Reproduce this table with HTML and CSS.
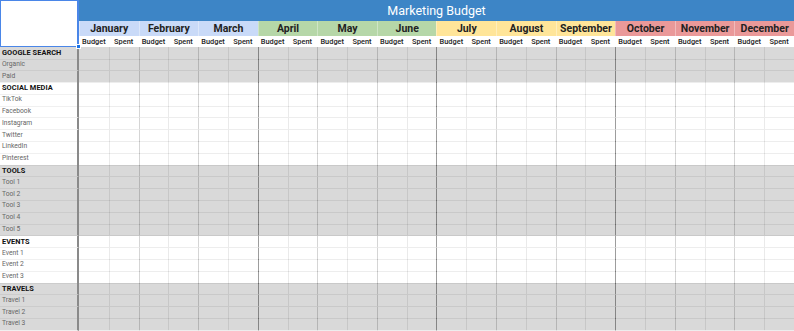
FILE: index.html
```html
<!DOCTYPE html>
<html>
<head>
<meta charset="utf-8">
<link rel="stylesheet" href="styles.css">
</head>
<body>
<div class="sheet">
  <div class="top">
    <div class="corner"><span class="handle"></span></div>
    <div class="head">
      <div class="title">Marketing Budget</div>
      <div class="months">
        <div class="m q1">January</div><div class="m q1">February</div><div class="m q1">March</div>
        <div class="m q2">April</div><div class="m q2">May</div><div class="m q2">June</div>
        <div class="m q3">July</div><div class="m q3">August</div><div class="m q3">September</div>
        <div class="m q4">October</div><div class="m q4">November</div><div class="m q4">December</div>
      </div>
      <div class="subs">
        <span>Budget</span><span>Spent</span><span>Budget</span><span>Spent</span><span>Budget</span><span>Spent</span>
        <span>Budget</span><span>Spent</span><span>Budget</span><span>Spent</span><span>Budget</span><span>Spent</span>
        <span>Budget</span><span>Spent</span><span>Budget</span><span>Spent</span><span>Budget</span><span>Spent</span>
        <span>Budget</span><span>Spent</span><span>Budget</span><span>Spent</span><span>Budget</span><span>Spent</span>
      </div>
    </div>
  </div>
  <div class="rows">
    <div class="row grey sec"><div class="lab">GOOGLE SEARCH</div><i></i><i></i><i></i><i></i><i></i><i></i><i></i><i></i><i></i><i></i><i></i><i></i><i></i><i></i><i></i><i></i><i></i><i></i><i></i><i></i><i></i><i></i><i></i><i></i></div>
    <div class="row grey"><div class="lab">Organic</div><i></i><i></i><i></i><i></i><i></i><i></i><i></i><i></i><i></i><i></i><i></i><i></i><i></i><i></i><i></i><i></i><i></i><i></i><i></i><i></i><i></i><i></i><i></i><i></i></div>
    <div class="row grey"><div class="lab">Paid</div><i></i><i></i><i></i><i></i><i></i><i></i><i></i><i></i><i></i><i></i><i></i><i></i><i></i><i></i><i></i><i></i><i></i><i></i><i></i><i></i><i></i><i></i><i></i><i></i></div>
    <div class="row sec"><div class="lab">SOCIAL MEDIA</div><i></i><i></i><i></i><i></i><i></i><i></i><i></i><i></i><i></i><i></i><i></i><i></i><i></i><i></i><i></i><i></i><i></i><i></i><i></i><i></i><i></i><i></i><i></i><i></i></div>
    <div class="row"><div class="lab">TikTok</div><i></i><i></i><i></i><i></i><i></i><i></i><i></i><i></i><i></i><i></i><i></i><i></i><i></i><i></i><i></i><i></i><i></i><i></i><i></i><i></i><i></i><i></i><i></i><i></i></div>
    <div class="row"><div class="lab">Facebook</div><i></i><i></i><i></i><i></i><i></i><i></i><i></i><i></i><i></i><i></i><i></i><i></i><i></i><i></i><i></i><i></i><i></i><i></i><i></i><i></i><i></i><i></i><i></i><i></i></div>
    <div class="row"><div class="lab">Instagram</div><i></i><i></i><i></i><i></i><i></i><i></i><i></i><i></i><i></i><i></i><i></i><i></i><i></i><i></i><i></i><i></i><i></i><i></i><i></i><i></i><i></i><i></i><i></i><i></i></div>
    <div class="row"><div class="lab">Twitter</div><i></i><i></i><i></i><i></i><i></i><i></i><i></i><i></i><i></i><i></i><i></i><i></i><i></i><i></i><i></i><i></i><i></i><i></i><i></i><i></i><i></i><i></i><i></i><i></i></div>
    <div class="row"><div class="lab">LinkedIn</div><i></i><i></i><i></i><i></i><i></i><i></i><i></i><i></i><i></i><i></i><i></i><i></i><i></i><i></i><i></i><i></i><i></i><i></i><i></i><i></i><i></i><i></i><i></i><i></i></div>
    <div class="row"><div class="lab">Pinterest</div><i></i><i></i><i></i><i></i><i></i><i></i><i></i><i></i><i></i><i></i><i></i><i></i><i></i><i></i><i></i><i></i><i></i><i></i><i></i><i></i><i></i><i></i><i></i><i></i></div>
    <div class="row grey sec"><div class="lab">TOOLS</div><i></i><i></i><i></i><i></i><i></i><i></i><i></i><i></i><i></i><i></i><i></i><i></i><i></i><i></i><i></i><i></i><i></i><i></i><i></i><i></i><i></i><i></i><i></i><i></i></div>
    <div class="row grey"><div class="lab">Tool 1</div><i></i><i></i><i></i><i></i><i></i><i></i><i></i><i></i><i></i><i></i><i></i><i></i><i></i><i></i><i></i><i></i><i></i><i></i><i></i><i></i><i></i><i></i><i></i><i></i></div>
    <div class="row grey"><div class="lab">Tool 2</div><i></i><i></i><i></i><i></i><i></i><i></i><i></i><i></i><i></i><i></i><i></i><i></i><i></i><i></i><i></i><i></i><i></i><i></i><i></i><i></i><i></i><i></i><i></i><i></i></div>
    <div class="row grey"><div class="lab">Tool 3</div><i></i><i></i><i></i><i></i><i></i><i></i><i></i><i></i><i></i><i></i><i></i><i></i><i></i><i></i><i></i><i></i><i></i><i></i><i></i><i></i><i></i><i></i><i></i><i></i></div>
    <div class="row grey"><div class="lab">Tool 4</div><i></i><i></i><i></i><i></i><i></i><i></i><i></i><i></i><i></i><i></i><i></i><i></i><i></i><i></i><i></i><i></i><i></i><i></i><i></i><i></i><i></i><i></i><i></i><i></i></div>
    <div class="row grey"><div class="lab">Tool 5</div><i></i><i></i><i></i><i></i><i></i><i></i><i></i><i></i><i></i><i></i><i></i><i></i><i></i><i></i><i></i><i></i><i></i><i></i><i></i><i></i><i></i><i></i><i></i><i></i></div>
    <div class="row sec"><div class="lab">EVENTS</div><i></i><i></i><i></i><i></i><i></i><i></i><i></i><i></i><i></i><i></i><i></i><i></i><i></i><i></i><i></i><i></i><i></i><i></i><i></i><i></i><i></i><i></i><i></i><i></i></div>
    <div class="row"><div class="lab">Event 1</div><i></i><i></i><i></i><i></i><i></i><i></i><i></i><i></i><i></i><i></i><i></i><i></i><i></i><i></i><i></i><i></i><i></i><i></i><i></i><i></i><i></i><i></i><i></i><i></i></div>
    <div class="row"><div class="lab">Event 2</div><i></i><i></i><i></i><i></i><i></i><i></i><i></i><i></i><i></i><i></i><i></i><i></i><i></i><i></i><i></i><i></i><i></i><i></i><i></i><i></i><i></i><i></i><i></i><i></i></div>
    <div class="row"><div class="lab">Event 3</div><i></i><i></i><i></i><i></i><i></i><i></i><i></i><i></i><i></i><i></i><i></i><i></i><i></i><i></i><i></i><i></i><i></i><i></i><i></i><i></i><i></i><i></i><i></i><i></i></div>
    <div class="row grey sec"><div class="lab">TRAVELS</div><i></i><i></i><i></i><i></i><i></i><i></i><i></i><i></i><i></i><i></i><i></i><i></i><i></i><i></i><i></i><i></i><i></i><i></i><i></i><i></i><i></i><i></i><i></i><i></i></div>
    <div class="row grey"><div class="lab">Travel 1</div><i></i><i></i><i></i><i></i><i></i><i></i><i></i><i></i><i></i><i></i><i></i><i></i><i></i><i></i><i></i><i></i><i></i><i></i><i></i><i></i><i></i><i></i><i></i><i></i></div>
    <div class="row grey"><div class="lab">Travel 2</div><i></i><i></i><i></i><i></i><i></i><i></i><i></i><i></i><i></i><i></i><i></i><i></i><i></i><i></i><i></i><i></i><i></i><i></i><i></i><i></i><i></i><i></i><i></i><i></i></div>
    <div class="row grey"><div class="lab">Travel 3</div><i></i><i></i><i></i><i></i><i></i><i></i><i></i><i></i><i></i><i></i><i></i><i></i><i></i><i></i><i></i><i></i><i></i><i></i><i></i><i></i><i></i><i></i><i></i><i></i></div>
  </div>
</div>
</body>
</html>
```

FILE: styles.css
```css
* { box-sizing: border-box; margin: 0; padding: 0; }
html, body { background: #fff; }
body { margin: 0; font-family: Roboto, "Liberation Sans", sans-serif; overflow: hidden; }

.sheet { width: 794px; height: 331px; overflow: hidden; }

.top { display: flex; height: 47px; }
.corner {
  position: relative;
  width: 79px;
  flex: none;
  border: 1px solid #4a86e8;
  border-right-width: 2px;
  background: #fff;
}
.handle {
  position: absolute;
  right: -4px;
  bottom: -3px;
  width: 5px;
  height: 5px;
  background: #1a73e8;
  border: 1px solid #fff;
}
.head { flex: 1; display: flex; flex-direction: column; }
.title {
  height: 21px;
  background: #3d85c6;
  color: #fff;
  font-size: 12.5px;
  line-height: 21px;
  text-align: center;
}
.months {
  height: 15px;
  display: grid;
  grid-template-columns: repeat(12, 1fr);
}
.m {
  font-size: 10.5px;
  font-weight: 700;
  color: #222;
  text-align: center;
  line-height: 16px;
  border-left: 1px solid rgba(255,255,255,0.35);
}
.q1 { background: #c9daf8; }
.q2 { background: #b6d7a8; }
.q3 { background: #ffe599; }
.q4 { background: #ea9999; }
.subs {
  height: 11px;
  display: grid;
  grid-template-columns: repeat(24, 1fr);
  background: #fff;
}
.subs span {
  font-size: 7.4px;
  font-weight: 500;
  color: #222;
  text-align: center;
  line-height: 11px;
}

.row {
  display: grid;
  grid-template-columns: 79px repeat(24, 1fr);
  height: 11.8px;
  background: #fff;
}
.row.grey { background: #d9d9d9; }
.lab {
  font-size: 6.7px;
  color: #666;
  padding-left: 2px;
  line-height: 11.5px;
  white-space: nowrap;
  border-right: 2px solid #8a8a8a;
  border-bottom: 1px solid rgba(0,0,0,0.06);
}
.sec .lab {
  font-size: 7.4px;
  font-weight: 700;
  color: #111;
  letter-spacing: 0.05px;
}
.row i {
  display: block;
  border-bottom: 1px solid rgba(0,0,0,0.07);
  border-left: 1px solid rgba(0,0,0,0.08);
}
.row i:nth-child(even) { border-left-color: rgba(0,0,0,0.16); }
.row i:nth-child(2) { border-left: none; }
.row i:nth-child(8),
.row i:nth-child(14),
.row i:nth-child(20) { border-left-color: rgba(0,0,0,0.38); }
```
